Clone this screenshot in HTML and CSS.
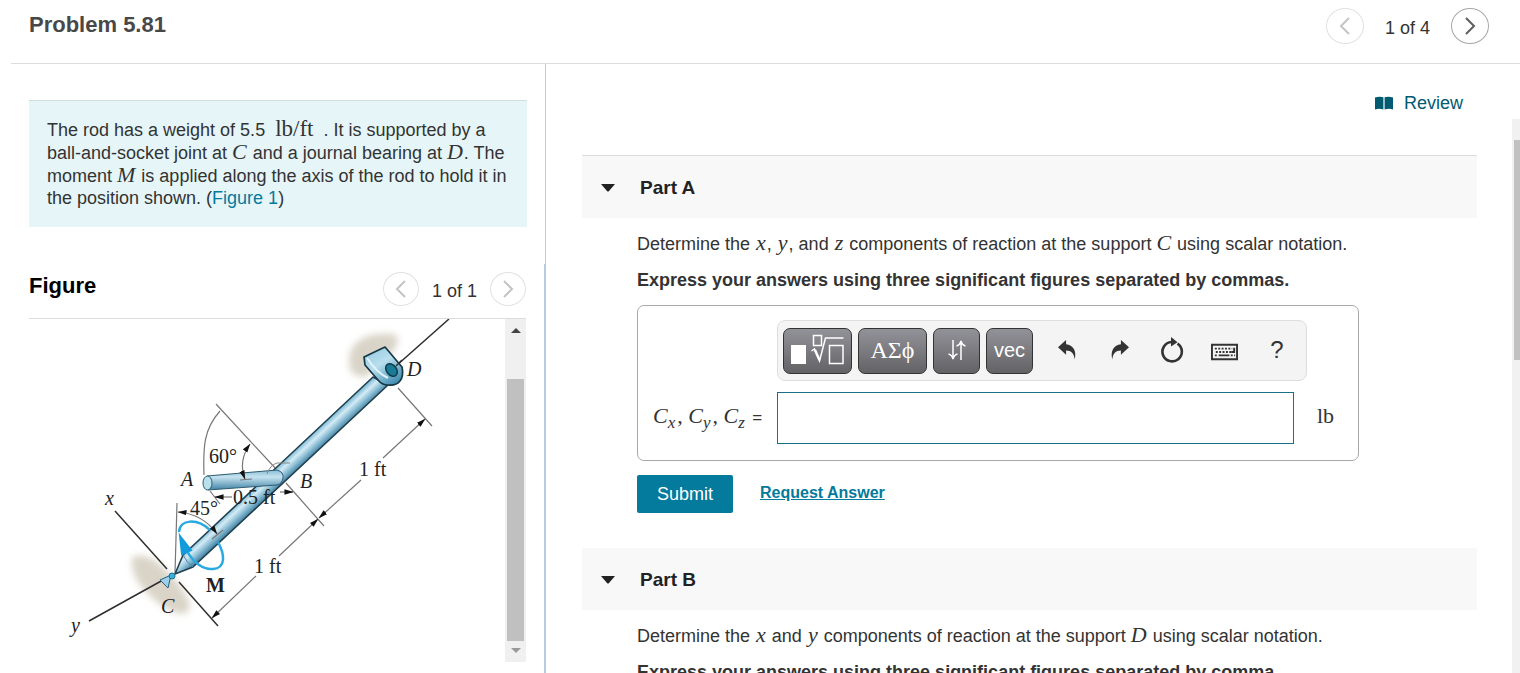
FILE: index.html
```html
<!DOCTYPE html>
<html lang="en">
<head>
<meta charset="utf-8">
<title>Problem 5.81</title>
<link rel="stylesheet" href="styles.css">
</head>
<body>
<div class="page">
  <header class="topbar">
    <h1 class="topbar-title">Problem 5.81</h1>
    <nav class="pager pager-large" aria-label="Problem pages">
      <button class="round" type="button" aria-label="Previous problem" disabled><svg viewBox="0 0 20 20"><path d="M14 2 6 10l8 8"/></svg></button>
      <span class="pager-text">1 of 4</span>
      <button class="round" type="button" aria-label="Next problem"><svg viewBox="0 0 20 20"><path d="m6 2 8 8-8 8"/></svg></button>
    </nav>
  </header>
  <main class="columns">
    <div class="left">
      <section class="intro">
        <p class="prompt">The rod has a weight of 5.5&nbsp; <span class="unit">lb/ft</span> . It is supported by a ball-and-socket joint at <i class="var cap">C</i> and a journal bearing at <i class="var cap">D</i>. The moment <i class="var cap">M</i> is applied along the axis of the rod to hold it in the position shown. (<a href="#figure">Figure 1</a>)</p>
      </section>
      <section class="figure" id="figure">
        <div class="figure-head">
          <h2 class="figure-title">Figure</h2>
          <nav class="pager" aria-label="Figure pages">
            <button class="round" type="button" aria-label="Previous figure" disabled><svg viewBox="0 0 20 20"><path d="M14 2 6 10l8 8"/></svg></button>
            <span class="pager-text">1 of 1</span>
            <button class="round" type="button" aria-label="Next figure" disabled><svg viewBox="0 0 20 20"><path d="m6 2 8 8-8 8"/></svg></button>
          </nav>
        </div>
        <div class="figure-body">
          <svg class="diagram" viewBox="29 320 476 343" role="img" aria-label="Rod supported at C and D with dimensions">
            <defs>
              <linearGradient id="rod" gradientUnits="userSpaceOnUse" x1="272" y1="471" x2="284" y2="484">
                <stop offset="0" stop-color="#6fb2d0"/><stop offset=".35" stop-color="#d3ebf5"/><stop offset=".65" stop-color="#8bbdd4"/><stop offset="1" stop-color="#3b7b9c"/>
              </linearGradient>
              <linearGradient id="arm" x1="0" y1="0" x2="0" y2="1">
                <stop offset="0" stop-color="#86bcd5"/><stop offset=".35" stop-color="#c6e3f0"/><stop offset="1" stop-color="#3f83a5"/>
              </linearGradient>
              <linearGradient id="lug" x1="0" y1="0" x2=".7" y2="1">
                <stop offset="0" stop-color="#8ec5dd"/><stop offset=".5" stop-color="#b9dfee"/><stop offset="1" stop-color="#4590b3"/>
              </linearGradient>
              <filter id="soft" x="-40%" y="-40%" width="180%" height="180%"><feGaussianBlur stdDeviation="3.5"/></filter>
              <marker id="tip" viewBox="0 0 10 6" refX="9.5" refY="3" markerWidth="9" markerHeight="6" markerUnits="userSpaceOnUse" orient="auto-start-reverse"><path class="ink" d="M0 0 10 3 0 6z"/></marker>
            </defs>
            <path class="shade" filter="url(#soft)" d="M350 370Q346 350 360 341T397 336Q400 350 384 360L366 378Q353 378 350 370z"/>
            <path class="shade" filter="url(#soft)" d="M132 558Q146 552 164 569T189 602Q192 617 178 614T147 594T132 558z"/>
            <path class="axis" d="M449 320 396 367M115 512 167 570M89 622 163 581M179 583l39 44"/>
            <path class="dim" d="M177 504 175 574M398 389l34 38M216 405l61 66M286 484l38 43M210 492l10 13"/>
            <path class="rod" d="M373 378 183 556 175 575 193 568 388 386z"/>
            <path class="joint" d="M183 556Q187 564 193 568"/>
            <path class="arm" d="M207 477 277 471Q284 473 283 479T277 486L208 491z"/>
            <ellipse class="armend" cx="207.500" cy="484" rx="4.500" ry="7"/>
            <path class="weld" d="M267 475Q270 466 277 464L290 464"/>
            <path class="lug" d="M364 358 385 348 402 368Q404 377 400 382T388 386Q382 386 378 381L365 366z"/>
            <path class="shine" d="M367 359Q377 374 388 379"/>
            <ellipse class="hole" cx="391.500" cy="371" rx="5" ry="7" transform="rotate(-38 391.500 371)"/>
            <path class="axis" d="M396 367l6-6"/>
            <path class="dim" d="M220 412C204 430 203 447 204 476M240 481l12-1M212 540l11-9"/>
            <path class="dim" marker-start="url(#tip)" marker-end="url(#tip)" d="M250 445Q238 462 245 480"/>
            <path class="dim" marker-start="url(#tip)" marker-end="url(#tip)" d="M178 513Q203 515 217 535"/>
            <path class="dim" marker-end="url(#tip)" d="M232 498H215"/>
            <path class="dim" marker-end="url(#tip)" d="M280 493H293"/>
            <path class="dim" marker-end="url(#tip)" d="M383 459 425 420"/>
            <path class="dim" marker-end="url(#tip)" d="M361 481 319 519"/>
            <path class="dim" marker-end="url(#tip)" d="M279 557 318 520"/>
            <path class="dim" marker-end="url(#tip)" d="M256 577 212 619"/>
            <path class="moment" d="M179 533C180 520 197 519 210 531M218 543C225 556 226 569 213 570C203 571 193 563 187 552"/>
            <path class="moment-tip" d="M180 537 191 551 182 555z"/>
            <path class="socket" d="M160 581 171 576 168 589z"/>
            <circle class="ball" cx="172" cy="577" r="3"/>
            <g class="labels">
              <text class="it" x="181" y="487">A</text>
              <text class="it" x="300" y="489">B</text>
              <text class="it" x="407" y="377">D</text>
              <text class="it" x="161" y="614">C</text>
              <text class="it" x="105" y="506">x</text>
              <text class="it" x="71" y="633">y</text>
              <text class="bold" x="206" y="593">M</text>
              <text x="209" y="464">60°</text>
              <text x="190" y="516">45°</text>
              <text x="233" y="505">0.5 ft</text>
              <text x="359" y="477">1 ft</text>
              <text x="254" y="574">1 ft</text>
            </g>
          </svg>
          <div class="scrollbar" aria-hidden="true">
            <span class="arrow up"></span><span class="thumb"></span><span class="arrow down"></span>
          </div>
        </div>
      </section>
    </div>
    <div class="right">
      <div class="review-row">
        <a class="review" href="#review"><svg viewBox="0 0 18 14"><path d="M0 1.500Q4 0 8.400 1.200V13.500Q4 12 0 13.500zM9.600 1.200Q14 0 18 1.500V13.500Q14 12 9.600 13.500z"/></svg>Review</a>
      </div>
      <div class="work">
        <div class="parts">
          <section class="part">
            <h2 class="part-head first"><button type="button" class="part-toggle"><svg viewBox="0 0 14 8"><path d="M0 0H14L8 7Q7 8 6 7z"/></svg>Part A</button></h2>
            <div class="part-body">
              <p>Determine the <i class="var low">x</i>, <i class="var low">y</i>, and <i class="var low">z</i> components of reaction at the support <i class="var cap">C</i> using scalar notation.</p>
              <p class="strong">Express your answers using three significant figures separated by commas.</p>
              <form class="answer">
                <div class="tools">
                  <button class="tool wide" type="button" aria-label="Templates"><svg viewBox="0 0 54 32"><path fill="#fff" d="M0 11h15v19H0z"/><path fill="none" stroke="#fff" stroke-width="1.500" d="M22.500 1.500h8v10h-8zM20.500 17l3-2 5 12 6-23h18M38.500 11.500h13.500v18H38.500z"/><path fill="none" stroke="#fff" stroke-width="2.500" d="m24 16 4.500 10"/></svg></button>
                  <button class="tool wide greek" type="button">ΑΣϕ</button>
                  <button class="tool" type="button" aria-label="Subscript and superscript"><svg class="updown" viewBox="0 0 18 22"><path d="M5 1v19M0.500 15q3.500 1 4.500 5 1-4 4.500-5M13 21V2M8.500 7q3.500-1 4.500-5 1 4 4.500 5"/></svg></button>
                  <button class="tool" type="button">vec</button>
                  <span class="plain-tools">
                    <button class="plain" type="button" aria-label="Undo"><svg viewBox="0 0 20 22"><path d="M0 8.500 8.500 1V5.500C16 6 20 13 17.500 21.500 17 15 14 12 8.500 12V16.500z"/></svg></button>
                    <button class="plain" type="button" aria-label="Redo"><svg viewBox="0 0 20 22"><path d="M20 8.500 11.500 1V5.500C4 6 0 13 2.500 21.500 3 15 6 12 11.500 12V16.500z"/></svg></button>
                    <button class="plain" type="button" aria-label="Reset"><svg class="reset" viewBox="0 0 24 26"><path fill="none" stroke="#333" stroke-width="2.600" d="M17.500 6.600A9.700 9.700 0 1 1 11.500 5"/><path d="M11 0 17.500 5.200 11 9.500z"/></svg></button>
                    <button class="plain" type="button" aria-label="Keyboard"><svg class="keyboard" viewBox="0 0 28 18"><path fill="none" stroke="#333" stroke-width="2" d="M1 1.500H27V16.500H1z"/><path fill="none" stroke="#333" stroke-width="2" stroke-dasharray="2 1.500" d="M4 5.500H22M5 9H21M4 12.500h3M20.500 12.500H25"/><path fill="none" stroke="#333" stroke-width="2" d="M8 12.500h11M24 4.500V9h-3"/></svg></button>
                    <button class="plain help" type="button" aria-label="Help">?</button>
                  </span>
                </div>
                <label class="answer-label" for="answer-a"><i>C<sub>x</sub></i>, <i>C<sub>y</sub></i>, <i>C<sub>z</sub></i> <span class="eq">=</span></label>
                <input class="answer-input" id="answer-a" type="text">
                <span class="answer-unit">lb</span>
              </form>
              <div class="actions">
                <button class="submit" type="button">Submit</button>
                <a class="request" href="#request">Request Answer</a>
              </div>
            </div>
          </section>
          <section class="part">
            <h2 class="part-head"><button type="button" class="part-toggle"><svg viewBox="0 0 14 8"><path d="M0 0H14L8 7Q7 8 6 7z"/></svg>Part B</button></h2>
            <div class="part-body">
              <p>Determine the <i class="var low">x</i> and <i class="var low">y</i> components of reaction at the support <i class="var cap">D</i> using scalar notation.</p>
              <p class="strong">Express your answers using three significant figures separated by comma.</p>
            </div>
          </section>
        </div>
        <div class="page-scroll" aria-hidden="true"><span class="page-thumb"></span></div>
      </div>
    </div>
  </main>
</div>
</body>
</html>
```
FILE: styles.css
```css
* { box-sizing: border-box; }
body {
  margin: 0;
  background: #fff;
  color: #333;
  font: 18px/22px "Liberation Sans", Arial, sans-serif;
}
h1, h2, p { margin: 0; }
button { font: inherit; color: inherit; cursor: pointer; }
a { color: #047a9c; text-decoration: none; }

.page {
  display: flex;
  flex-direction: column;
  height: 100vh;
  padding-left: 11px;
  overflow: hidden;
}
.topbar {
  display: flex;
  justify-content: space-between;
  align-items: flex-start;
  flex: none;
  height: 64px;
  padding: 8px 31px 0 18px;
  border-bottom: 1px solid #dcdcdf;
}
.topbar-title { font-size: 22px; line-height: 34px; color: #484848; }

.pager { display: flex; align-items: center; gap: 13px; }
.pager-text { padding-top: 4px; }
.pager-large { gap: 21px; }
.round {
  display: grid;
  place-items: center;
  width: 36px;
  height: 34px;
  padding: 0;
  border: 1px solid #a8a8ac;
  border-radius: 50%;
  background: #fff;
}
.pager-large .round { width: 38px; height: 36px; }
.round svg {
  width: 20px;
  height: 20px;
  fill: none;
  stroke: #5c5c62;
  stroke-width: 2;
}
.round:disabled { border-color: #e2e2e4; }
.round:disabled svg { stroke: #c4c4c6; }

.columns {
  display: grid;
  grid-template-columns: 535fr 974fr;
  flex: 1;
  min-height: 0;
}
.left { display: flex; flex-direction: column; min-height: 0; }
.intro {
  padding: 36px 18px 37px;
  border-right: 1px solid #c0cede;
}
.prompt {
  padding: 17px 18px 18px;
  border-top: 1px solid #d0dede;
  background: #e6f6f8;
}
.unit, .var { font-family: "Liberation Serif", "Times New Roman", serif; }
.unit { font-size: 23px; line-height: 22px; padding-right: 5px; }
.var.cap { font-size: 22px; line-height: 22px; padding-right: 1px; }
.var.low { font-size: 22px; line-height: 22px; padding: 0 1px; }

.figure {
  flex: 1;
  padding: 8px 18px 0;
  border-right: 2px solid #b8cadf;
}
.figure-head {
  display: flex;
  justify-content: space-between;
  align-items: flex-start;
  height: 47px;
  border-bottom: 1px solid #dcdcdf;
}
.figure-title { font-size: 22px; line-height: 28px; color: #000; }
.figure-body { display: flex; align-items: stretch; }
.diagram { flex: 1; min-width: 0; display: block; }
.scrollbar {
  display: flex;
  flex-direction: column;
  align-items: center;
  flex: none;
  width: 21px;
  padding: 9px 2px;
  background: #f0f0f0;
}
.thumb { flex: 1; width: 17px; margin: 46px 0 7px; background: #c0c0c0; }
.arrow { border: 5px solid transparent; }
.arrow.up { border-top: 0; border-bottom-color: #444; }
.arrow.down { border-bottom: 0; border-top-color: #999; }

.shade { fill: #d9d4c7; }
.ink { fill: #111; }
.axis { fill: none; stroke: #2f2f2f; stroke-width: 1.5; }
.dim { fill: none; stroke: #777; stroke-width: 1.2; }
.rod { fill: url(#rod); stroke: #21404f; stroke-width: 1.6; stroke-linejoin: round; }
.joint { fill: none; stroke: #4b88a5; }
.arm { fill: url(#arm); stroke: #2f5b70; }
.armend { fill: #b9e0ed; stroke: #2f5b70; }
.weld { fill: none; stroke: #888; }
.lug { fill: url(#lug); stroke: #173745; stroke-width: 1.7; stroke-linejoin: round; }
.shine { fill: none; stroke: #e2f4fa; stroke-width: 2; }
.hole { fill: #187c96; stroke: #123947; stroke-width: 1.5; }
.moment { fill: none; stroke: #27a9e1; stroke-width: 2.5; }
.moment-tip { fill: #139bdc; stroke: #139bdc; stroke-width: 2; }
.socket { fill: #9bd0ea; stroke: #2b5d78; }
.ball { fill: #39b1dc; stroke: #1d6d8d; }
.labels { font: 20px "Liberation Serif", "Times New Roman", serif; fill: #222; }
.it { font-style: italic; }
.bold { font-weight: bold; }

.right { display: flex; flex-direction: column; min-width: 0; min-height: 0; }
.review-row {
  display: flex;
  justify-content: flex-end;
  flex: none;
  height: 55px;
  padding: 28px 57px 0 0;
}
.review { display: flex; align-items: center; gap: 11px; height: 22px; color: #005a70; }
.review svg { width: 18px; height: 14px; fill: currentColor; }
.work { display: flex; flex: 1; min-height: 0; overflow: hidden; }
.parts { flex: 1; min-width: 0; padding: 36px 35px 0 36px; }
.page-scroll { flex: none; width: 8px; padding: 21px 0 0 2px; background: #f1f1f1; }
.page-thumb { display: block; height: 220px; background: #c1c1c1; }

.part { margin-bottom: 35px; }
.part-head { padding: 0 25px 0 19px; background: #f8f8f8; font-size: 20px; }
.part-head.first { border-top: 1px solid #dcdcdf; }
.part-toggle {
  display: flex;
  align-items: center;
  gap: 25px;
  width: 100%;
  height: 62px;
  padding: 2px 0 0;
  border: 0;
  background: none;
  color: #222;
  font-size: 19px;
}
.part-toggle svg { width: 14px; height: 8px; fill: #222; }
.part-body { padding: 14px 55px 0; }
.part-body p { margin-bottom: 14px; }
.part-body .strong { font-weight: bold; }

.answer {
  display: grid;
  grid-template-columns: 112px 1fr 26px;
  align-items: center;
  column-gap: 12px;
  row-gap: 11px;
  max-width: 722px;
  padding: 14px 26px 16px 15px;
  border: 1px solid #a8a8a8;
  border-radius: 7px;
}
.tools {
  grid-column: 2 / 4;
  display: flex;
  align-items: center;
  gap: 6px;
  width: 530px;
  max-width: 100%;
  height: 61px;
  padding: 0 5px;
  border: 1px solid #dedede;
  border-radius: 8px;
  background: #f4f4f4;
}
.tool {
  display: grid;
  place-items: center;
  width: 47px;
  height: 46px;
  padding: 0 0 2px;
  border: 1px solid #333;
  border-radius: 7px;
  background: linear-gradient(#929299, #636366);
  color: #fff;
  font-size: 20px;
}
.tool.wide { width: 69px; }
.tool.wide svg { width: 54px; height: 32px; }
.tool.greek { font-family: "Liberation Serif", "Times New Roman", serif; font-size: 24px; }
.tool .updown { width: 18px; height: 22px; fill: none; stroke: #fff; stroke-width: 1.5; }
.plain-tools { display: flex; flex: 1; justify-content: space-between; padding: 0 4px 0 8px; }
.plain {
  display: grid;
  place-items: center;
  width: 40px;
  height: 40px;
  padding: 0 0 2px;
  border: 0;
  background: none;
  color: #333;
}
.plain svg { width: 19px; height: 21px; fill: #333; }
.plain .reset { width: 24px; height: 26px; }
.plain .keyboard { width: 27px; height: 18px; margin-top: 4px; }
.plain.help { font-size: 24px; }
.answer-label {
  padding-bottom: 5px;
  font: 22px/26px "Liberation Serif", "Times New Roman", serif;
  white-space: nowrap;
}
.answer-label i { padding-right: 2px; }
.answer-label sub { font-size: 17px; line-height: 0; }
.eq { font: 17px "Liberation Sans", Arial, sans-serif; }
.answer-input {
  width: 100%;
  height: 52px;
  padding: 0 10px;
  border: 1px solid #1a7086;
  font: inherit;
}
.answer-unit { padding: 0 0 4px 11px; font: 22px/26px "Liberation Serif", "Times New Roman", serif; }

.actions { display: flex; align-items: center; gap: 27px; margin-top: 14px; }
.submit {
  width: 96px;
  height: 38px;
  padding: 0;
  border: 0;
  border-radius: 2px;
  background: #047a9c;
  color: #fff;
}
.request { padding-bottom: 3px; font-size: 16px; font-weight: bold; text-decoration: underline; }
```
